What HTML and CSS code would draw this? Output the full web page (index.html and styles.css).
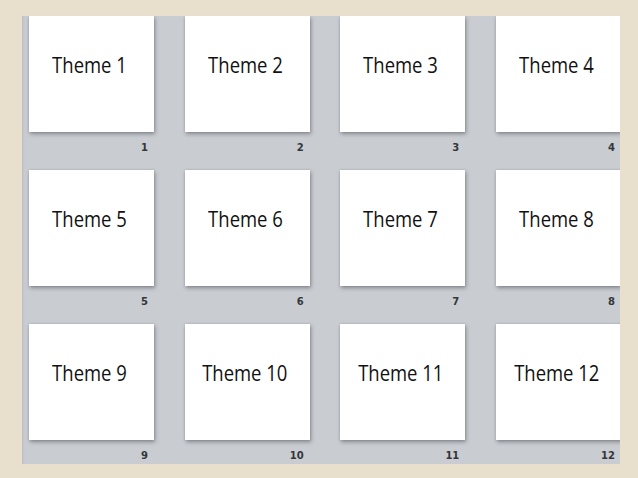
FILE: index.html
```html
<!DOCTYPE html>
<html>
<head>
<meta charset="utf-8">
<link rel="stylesheet" href="styles.css">
</head>
<body>
<div class="panel">
  <div class="grid">
    <div class="slot"><div class="card"><span class="title">Theme 1</span></div><div class="num">1</div></div>
    <div class="slot"><div class="card"><span class="title">Theme 2</span></div><div class="num">2</div></div>
    <div class="slot"><div class="card"><span class="title">Theme 3</span></div><div class="num">3</div></div>
    <div class="slot"><div class="card"><span class="title">Theme 4</span></div><div class="num">4</div></div>
    <div class="slot"><div class="card"><span class="title">Theme 5</span></div><div class="num">5</div></div>
    <div class="slot"><div class="card"><span class="title">Theme 6</span></div><div class="num">6</div></div>
    <div class="slot"><div class="card"><span class="title">Theme 7</span></div><div class="num">7</div></div>
    <div class="slot"><div class="card"><span class="title">Theme 8</span></div><div class="num">8</div></div>
    <div class="slot"><div class="card"><span class="title">Theme 9</span></div><div class="num">9</div></div>
    <div class="slot"><div class="card"><span class="title">Theme 10</span></div><div class="num">10</div></div>
    <div class="slot"><div class="card"><span class="title">Theme 11</span></div><div class="num">11</div></div>
    <div class="slot"><div class="card"><span class="title">Theme 12</span></div><div class="num">12</div></div>
  </div>
</div>
</body>
</html>
```
FILE: styles.css
```css
html, body {
  margin: 0;
  padding: 0;
  background: #e9dfcd;
  width: 638px;
  height: 478px;
  overflow: hidden;
}
.panel {
  margin: 16px 0 0 22px;
  width: 598px;
  height: 448px;
  background: #c9ccd1;
  overflow: hidden;
  box-shadow: inset 3px 0 3px -2px rgba(0,0,0,0.08);
}
.grid {
  display: grid;
  grid-template-columns: repeat(4, 125px);
  column-gap: 30.67px;
  padding-left: 7px;
}
.slot {
  display: flex;
  flex-direction: column;
  height: 154px;
}
.card {
  height: 116px;
  background: #ffffff;
  box-shadow: 1px 2px 4px rgba(50,55,65,0.45), 0 0 2px rgba(50,55,65,0.15);
  box-sizing: border-box;
  padding: 33px 4px 0 0;
  text-align: center;
  white-space: nowrap;
}
.title {
  display: inline-block;
  font-family: "Open Sans", sans-serif;
  font-size: 22px;
  line-height: 30px;
  color: #111111;
  transform: scaleX(0.84);
  transform-origin: center;
}
.num {
  text-align: right;
  padding: 10px 6px 0 0;
  font-family: "DejaVu Sans", sans-serif;
  font-weight: bold;
  font-size: 10px;
  line-height: 12px;
  color: #33363b;
}
```
